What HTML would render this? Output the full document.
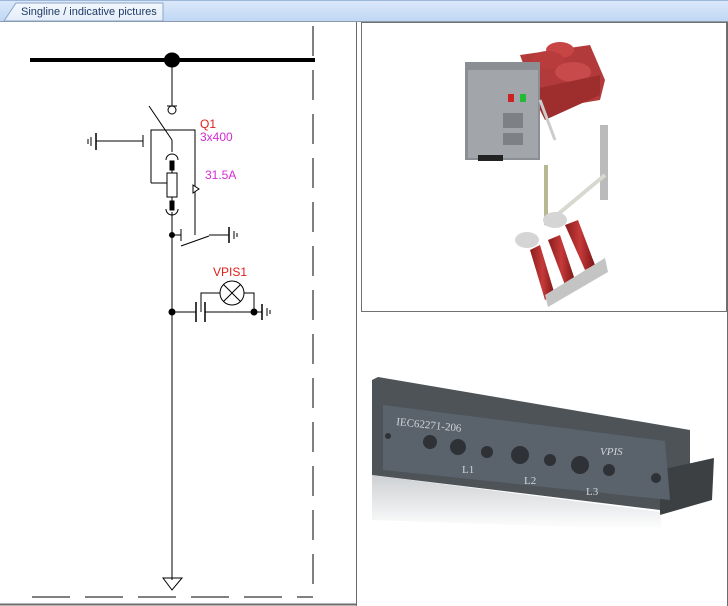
<!DOCTYPE html>
<html><head><meta charset="utf-8"><style>
html,body{margin:0;padding:0;width:728px;height:606px;overflow:hidden;background:#fff;font-family:"Liberation Sans",sans-serif}
</style></head><body>
<svg width="728" height="606" viewBox="0 0 728 606" xmlns="http://www.w3.org/2000/svg" style="display:block">
<defs>
<linearGradient id="tabbar" x1="0" y1="0" x2="0" y2="1"><stop offset="0" stop-color="#dce9fa"/><stop offset="1" stop-color="#c0d7f4"/></linearGradient>
<linearGradient id="tab" x1="0" y1="0" x2="0" y2="1"><stop offset="0" stop-color="#f4f8fd"/><stop offset="1" stop-color="#e3edf9"/></linearGradient>
<linearGradient id="refl" x1="0" y1="0" x2="0" y2="1"><stop offset="0" stop-color="#b8bcc0"/><stop offset="1" stop-color="#ffffff"/></linearGradient>
<linearGradient id="red" x1="0" y1="0" x2="1" y2="0"><stop offset="0" stop-color="#8a1c1c"/><stop offset=".5" stop-color="#c63a3a"/><stop offset="1" stop-color="#7a1515"/></linearGradient>
</defs>
<rect x="0" y="0" width="728" height="21" fill="url(#tabbar)"/>
<line x1="0" y1="0.5" x2="728" y2="0.5" stroke="#9bb6d8"/>
<path d="M4 21 L16 3 L163 3 L163 21 Z" fill="url(#tab)" stroke="#8aa6c8"/>
<text x="21" y="15" font-size="11" fill="#1f3b66">Singline / indicative pictures</text>
<line x1="0" y1="21.5" x2="728" y2="21.5" stroke="#8a9bb0"/>
<line x1="356.5" y1="22" x2="356.5" y2="606" stroke="#6b6b6b"/>
<line x1="0" y1="604.5" x2="357" y2="604.5" stroke="#6b6b6b" stroke-width="2"/>
<line x1="727.5" y1="22" x2="727.5" y2="606" stroke="#6b6b6b"/>
<rect x="361.5" y="22.5" width="365" height="289" fill="#fff" stroke="#707070"/>
<g stroke="#000" fill="none" stroke-width="1">
<line x1="30" y1="60" x2="315" y2="60" stroke-width="4"/>
<ellipse cx="172" cy="60" rx="7.5" ry="7" fill="#000"/>
<line x1="172" y1="60" x2="172" y2="106"/>
<line x1="167" y1="106" x2="177" y2="106"/>
<circle cx="172" cy="110" r="4"/>
<line x1="149" y1="106" x2="172" y2="140"/>
<line x1="172" y1="140" x2="172" y2="152"/>
<path d="M151 183 L151 130 L195 130 L195 235"/>
<line x1="151" y1="183" x2="167" y2="183"/>
<line x1="96" y1="141" x2="143" y2="141"/>
<line x1="143" y1="135" x2="143" y2="147"/>
<line x1="96" y1="133" x2="96" y2="150" stroke-width="1.5"/>
<line x1="91" y1="137" x2="91" y2="146"/>
<line x1="88" y1="139" x2="88" y2="144"/>
<path d="M166 160 a6 6 0 0 1 12 0"/>
<rect x="170" y="161" width="4" height="9" fill="#000"/>
<line x1="172" y1="170" x2="172" y2="173"/>
<rect x="167" y="173" width="10" height="24"/>
<line x1="172" y1="197" x2="172" y2="201"/>
<rect x="170" y="201" width="4" height="9" fill="#000"/>
<path d="M166 209 a6 6 0 0 0 12 0"/>
<path d="M193 185 L199 189 L193 193 Z" fill="#fff"/>
<line x1="172" y1="212" x2="172" y2="580"/>
<circle cx="172" cy="235" r="2.5" fill="#000"/>
<line x1="172" y1="235" x2="181" y2="235"/>
<line x1="181" y1="229" x2="181" y2="241"/>
<line x1="181" y1="246" x2="209" y2="236"/>
<line x1="209" y1="235" x2="229" y2="235"/>
<line x1="229" y1="227" x2="229" y2="243" stroke-width="1.5"/>
<line x1="234" y1="231" x2="234" y2="239"/>
<line x1="237" y1="233" x2="237" y2="237"/>
<circle cx="172" cy="312" r="3" fill="#000"/>
<line x1="172" y1="312" x2="196" y2="312"/>
<line x1="196" y1="302" x2="196" y2="322" stroke-width="1.5"/>
<line x1="205" y1="302" x2="205" y2="322" stroke-width="1.5"/>
<line x1="205" y1="312" x2="254" y2="312"/>
<circle cx="254" cy="312" r="3" fill="#000"/>
<line x1="254" y1="312" x2="262" y2="312"/>
<line x1="262" y1="304" x2="262" y2="320" stroke-width="1.5"/>
<line x1="267" y1="308" x2="267" y2="316"/>
<line x1="270" y1="310" x2="270" y2="314"/>
<path d="M201 312 L201 293 L220 293 M244 293 L254 293 L254 312"/>
<circle cx="232" cy="293" r="12"/>
<path d="M223.5 284.5 L240.5 301.5 M240.5 284.5 L223.5 301.5"/>
<path d="M163 578 L182 578 L172 590 Z"/>
<line x1="313" y1="22" x2="313" y2="597" stroke-dasharray="30,14" stroke-dashoffset="-4"/>
<line x1="32" y1="597" x2="313" y2="597" stroke-dasharray="38,15"/>
</g>
<text x="200" y="128" font-size="12" fill="#e0201a">Q1</text>
<text x="200" y="141" font-size="12" fill="#d42ad4">3x400</text>
<text x="205" y="179" font-size="12" fill="#d42ad4">31.5A</text>
<text x="213" y="276" font-size="12" fill="#e0201a">VPIS1</text>
<g>
<path d="M520 55 L590 45 L605 80 L600 100 L540 110 Z" fill="#b33a3a"/>
<ellipse cx="560" cy="50" rx="14" ry="8" fill="#c74545"/>
<ellipse cx="548" cy="60" rx="16" ry="9" fill="#b83c3c"/>
<ellipse cx="573" cy="72" rx="18" ry="10" fill="#c84a4a"/>
<path d="M530 90 L600 75 L600 95 L545 120 Z" fill="#9e2e2e"/>
<rect x="465" y="62" width="75" height="98" fill="#8b8f93"/>
<rect x="468" y="70" width="70" height="88" fill="#a2a6aa"/>
<rect x="508" y="94" width="6" height="8" fill="#c22"/>
<rect x="520" y="94" width="6" height="8" fill="#2b3"/>
<rect x="503" y="113" width="20" height="15" fill="#7d8185"/>
<rect x="503" y="133" width="20" height="12" fill="#7d8185"/>
<rect x="478" y="155" width="25" height="6" fill="#222"/>
<line x1="540" y1="100" x2="555" y2="140" stroke="#ccc" stroke-width="3"/>
<line x1="546" y1="165" x2="546" y2="225" stroke="#b5b890" stroke-width="4"/>
<rect x="600" y="125" width="8" height="75" fill="#bbb"/>
<line x1="545" y1="225" x2="605" y2="175" stroke="#d8d8d0" stroke-width="4"/>
<ellipse cx="527" cy="240" rx="12" ry="8" fill="#d5d5d5"/>
<ellipse cx="555" cy="220" rx="12" ry="8" fill="#d5d5d5"/>
<path d="M530 250 L545 300 L555 295 L540 245 Z" fill="url(#red)"/>
<path d="M548 240 L565 285 L575 280 L560 235 Z" fill="url(#red)"/>
<path d="M565 225 L585 270 L595 265 L578 220 Z" fill="url(#red)"/>
<path d="M545 295 L605 258 L608 272 L548 307 Z" fill="#c4c4c4"/>
</g>
<g>
<path d="M372 380 L378 377 L690 430 L690 470 L660 510 L372 475 Z" fill="#4d5357"/>
<path d="M660 470 L714 458 L712 500 L660 515 Z" fill="#3c4043"/>
<path d="M383 405 L665 441 L670 500 L383 470 Z" fill="#5a636c"/>
<path d="M372 475 L660 512 L662 530 L372 520 Z" fill="url(#refl)" opacity="0.7"/>
<g fill="#2e3236">
<circle cx="430" cy="442" r="7"/><circle cx="458" cy="447" r="8"/>
<circle cx="487" cy="452" r="6"/><circle cx="520" cy="455" r="9"/>
<circle cx="550" cy="460" r="6"/><circle cx="580" cy="465" r="9"/>
<circle cx="609" cy="470" r="6"/><circle cx="656" cy="478" r="5"/>
<circle cx="388" cy="436" r="3"/>
</g>
<text x="396" y="425" font-size="11" fill="#d0d4d8" font-family="Liberation Serif,serif" transform="rotate(6 396 425)">IEC62271-206</text>
<text x="462" y="473" font-size="11" fill="#d0d4d8" font-family="Liberation Serif,serif">L1</text>
<text x="524" y="484" font-size="11" fill="#d0d4d8" font-family="Liberation Serif,serif">L2</text>
<text x="586" y="495" font-size="11" fill="#d0d4d8" font-family="Liberation Serif,serif">L3</text>
<text x="600" y="455" font-size="11" font-style="italic" fill="#d0d4d8" font-family="Liberation Serif,serif">VPIS</text>
</g>
</svg>
</body></html>
